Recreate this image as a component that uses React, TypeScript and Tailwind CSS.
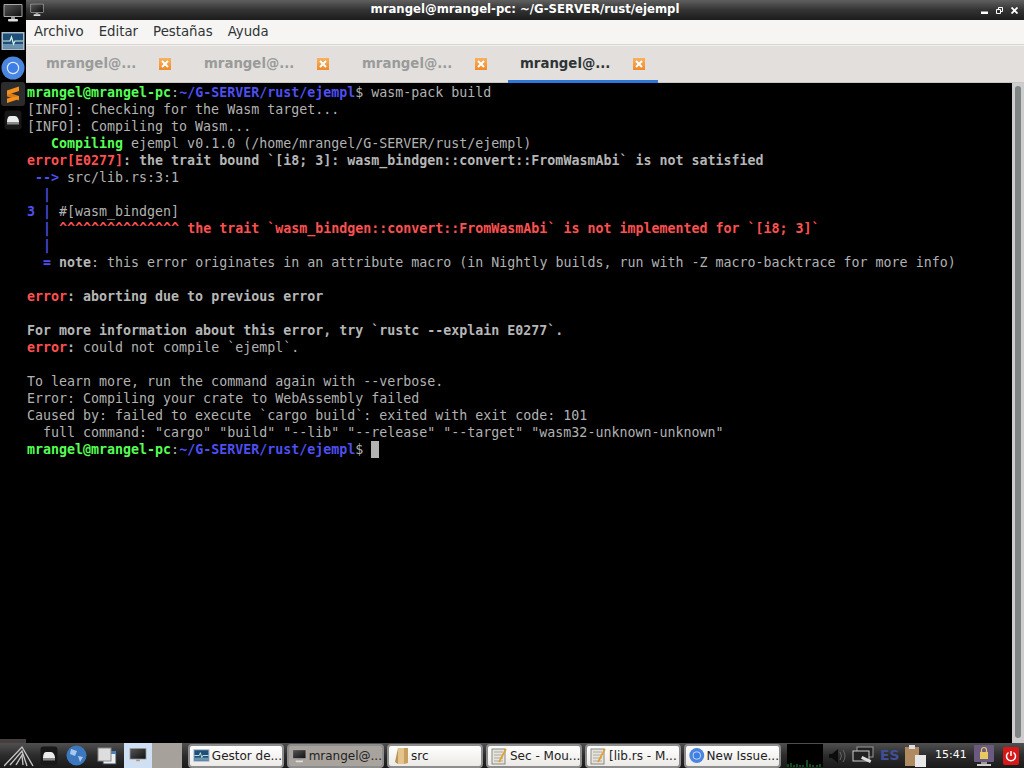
import { ReactNode } from "react";

const G = "text-[#55ff55] font-bold";
const B = "text-[#4f4ff0] font-bold";
const R = "text-[#ff5050] font-bold";
const W = "font-bold text-[#b6b6b6]";

function Line({ children }: { children?: ReactNode }) {
  return <div className="h-[17px] whitespace-pre">{children || " "}</div>;
}

function Prompt() {
  return (
    <>
      <span className={G}>mrangel@mrangel-pc</span>:<span className={B}>~/G-SERVER/rust/ejempl</span>$
    </>
  );
}

function Monitor({ size = 20 }: { size?: number }) {
  return (
    <svg width={size} height={size} viewBox="0 0 20 20">
      <defs>
        <linearGradient id="scr" x1="0" y1="0" x2="1" y2="1">
          <stop offset="0" stopColor="#555" />
          <stop offset="1" stopColor="#111" />
        </linearGradient>
      </defs>
      <rect x="0.5" y="1" width="19" height="13" rx="1" fill="#a8a8a8" />
      <rect x="1.500" y="2" width="17" height="11" fill="url(#scr)" />
      <rect x="8" y="14" width="4" height="2" fill="#999" />
      <rect x="5" y="16" width="10" height="2.500" rx="1" fill="#ddd" />
    </svg>
  );
}

function Pulse({ size = 24 }: { size?: number }) {
  return (
    <svg width={size} height={size} viewBox="0 0 24 24">
      <rect x="0.5" y="3" width="23" height="18" fill="#a9bccb" />
      <rect x="2" y="4.500" width="20" height="15" fill="#1d4f78" />
      <rect x="2" y="15" width="20" height="4.500" fill="#6b92ae" />
      <path d="M2 12h7l1.500-4 2 7 1.500-3h8" fill="none" stroke="#d8f4ea" strokeWidth="1.200" />
    </svg>
  );
}

function Chrome({ size = 24 }: { size?: number }) {
  return (
    <svg width={size} height={size} viewBox="0 0 24 24">
      <circle cx="12" cy="12" r="11.500" fill="#4a86e0" />
      <circle cx="12" cy="12" r="6.200" fill="#dfe8f8" />
      <circle cx="12" cy="12" r="5" fill="#3d7ee6" />
    </svg>
  );
}

function Sublime() {
  return (
    <svg width="14" height="19" viewBox="0 0 14 19">
      <path d="M1 7 13 11v4.500L1 11.500z" fill="#d97a14" />
      <path d="M1 5.500 13 1.500v4.500L1 10z" fill="#f28f1e" />
      <path d="M1 13.500 13 11v3L1 18z" fill="#f28f1e" />
    </svg>
  );
}

function Drive({ size = 20 }: { size?: number }) {
  return (
    <svg width={size} height={size} viewBox="0 0 20 20">
      <rect x="1.500" y="0.500" width="17" height="19" rx="3" fill="#181818" />
      <path d="M4 12c0-3 1-6 3-6h5c2 0 4 3 4 6z" fill="#ececec" />
      <rect x="4" y="12" width="12" height="2.500" fill="#8a8a8a" />
    </svg>
  );
}

function CloseTab() {
  return (
    <div className="flex h-3 w-3 items-center justify-center bg-gradient-to-b from-[#f7b25e] to-[#ee8a28]">
      <svg width="8" height="8" viewBox="0 0 8 8">
        <path d="M1 1l6 6M7 1L1 7" stroke="#fff" strokeWidth="2" />
      </svg>
    </div>
  );
}

function Tab({ active }: { active?: boolean }) {
  return (
    <div
      className={
        "ml-[8px] flex h-[37px] w-[150px] items-center justify-between border-b-[3px] pl-[12px] pr-[13px] pt-[2px] text-[13.300px] font-bold " +
        (active ? "border-[#2f78d8] text-[#2e3436]" : "border-transparent text-[#9a9a9a]")
      }
    >
      <span>mrangel@...</span>
      <CloseTab />
    </div>
  );
}

function Doc() {
  return (
    <svg width="17" height="18" viewBox="0 0 17 18" className="shrink-0">
      <rect x="1" y="2" width="13" height="15" fill="#e8e4da" stroke="#888" />
      <path d="M3 5h9M3 8h9M3 11h9M3 14h9" stroke="#aaa" />
      <path d="M15 2 8 15" stroke="#e0a030" strokeWidth="1.600" />
    </svg>
  );
}

function Folder() {
  return (
    <svg width="17" height="18" viewBox="0 0 17 18" className="shrink-0">
      <path d="M6 1h7v16H6z" fill="#e3c48c" />
      <path d="M12 1h4v15l-4 1z" fill="#c9a060" />
      <path d="M3 15l3-14v16z" fill="#b8935a" />
    </svg>
  );
}

function Task({ icon, label, active, w }: { icon: ReactNode; label: string; active?: boolean; w: string }) {
  return (
    <div
      className={
        "flex h-[24px] items-center gap-[2px] overflow-hidden rounded-[4px] border-2 border-[#8d8d8d] pl-[3px] text-[12px] text-[#222] " +
        w +
        " " +
        (active ? "bg-[#a9a39e]" : "bg-gradient-to-b from-white to-[#eceae6]")
      }
    >
      {icon}
      <span className="whitespace-pre">{label}</span>
    </div>
  );
}

export default function App() {
  return (
    <div className="flex h-[768px] w-[1024px] flex-col overflow-hidden bg-black font-['DejaVu_Sans',sans-serif]">
      <div className="flex min-h-0 flex-1">
        {/* dock */}
        <div className="flex w-[26px] flex-col items-center bg-black pt-[3px]">
          <Monitor />
          <div className="mt-[6px]"><Pulse /></div>
          <div className="mt-[3px]"><Chrome /></div>
          <div className="mt-[2px] flex h-[24px] w-[24px] items-center justify-center rounded-[3px] bg-[#2c2c2c]">
            <Sublime />
          </div>
          <div className="mt-[4px]"><Drive /></div>
          <div className="mt-auto h-[4px] w-full bg-[#45403e]" />
        </div>

        {/* terminal window */}
        <div className="flex min-w-0 flex-1 flex-col">
          <div className="flex h-[20px] items-center bg-gradient-to-b from-[#606060] via-[#333] to-[#1c1c1c]">
            <div className="flex w-[80px] pl-[4px]"><Monitor size={14} /></div>
            <span className="flex-1 text-center text-[11.700px] font-bold text-white">mrangel@mrangel-pc: ~/G-SERVER/rust/ejempl</span>
            <div className="flex w-[80px] items-center justify-end gap-[8px] pr-[6px]">
              <svg width="7" height="7" viewBox="0 0 7 7"><rect x="0" y="4.500" width="7" height="2.500" fill="#fff" /></svg>
              <svg width="7" height="7" viewBox="0 0 7 7"><path d="M2.500 2V.5h4v4H5M.5 2.500h4v4h-4z" fill="none" stroke="#fff" /></svg>
              <svg width="7" height="7" viewBox="0 0 7 7"><path d="M.5.5l6 6M6.500.5l-6 6" stroke="#fff" strokeWidth="1.800" /></svg>
            </div>
          </div>
          <div className="flex h-[25px] items-center gap-[15px] border-b border-[#d8d6d2] bg-[#f6f5f3] pl-[8px] text-[13.300px] text-[#2e3436]">
            <span>Archivo</span>
            <span>Editar</span>
            <span>Pestañas</span>
            <span>Ayuda</span>
          </div>
          <div className="flex h-[38px] border-t border-[#f0efed] border-b border-b-[#c8c6c2] bg-[#e2dfdc]">
            <Tab />
            <Tab />
            <Tab />
            <Tab active />
          </div>
          <div className="flex min-h-0 flex-1">
            <div className="min-w-0 flex-1 bg-black pl-[1px] pt-[1px] font-['DejaVu_Sans_Mono',monospace] text-[13.300px] leading-[17px] text-[#b2b2b2]">
              <Line><Prompt /> wasm-pack build</Line>
              <Line>[INFO]: Checking for the Wasm target...</Line>
              <Line>[INFO]: Compiling to Wasm...</Line>
              <Line><span className={G}>   Compiling</span> ejempl v0.1.0 (/home/mrangel/G-SERVER/rust/ejempl)</Line>
              <Line><span className={R}>error[E0277]</span><span className={W}>: the trait bound `[i8; 3]: wasm_bindgen::convert::FromWasmAbi` is not satisfied</span></Line>
              <Line> <span className={B}>--&gt;</span> src/lib.rs:3:1</Line>
              <Line><span className={B}>  |</span></Line>
              <Line><span className={B}>3 |</span> #[wasm_bindgen]</Line>
              <Line><span className={B}>  |</span> <span className={R}>^^^^^^^^^^^^^^^ the trait `wasm_bindgen::convert::FromWasmAbi` is not implemented for `[i8; 3]`</span></Line>
              <Line><span className={B}>  |</span></Line>
              <Line>  <span className={B}>=</span> <span className={W}>note</span>: this error originates in an attribute macro (in Nightly builds, run with -Z macro-backtrace for more info)</Line>
              <Line />
              <Line><span className={R}>error</span><span className={W}>: aborting due to previous error</span></Line>
              <Line />
              <Line><span className={W}>For more information about this error, try `rustc --explain E0277`.</span></Line>
              <Line><span className={R}>error</span><span className={W}>:</span> could not compile `ejempl`.</Line>
              <Line />
              <Line>To learn more, run the command again with --verbose.</Line>
              <Line>Error: Compiling your crate to WebAssembly failed</Line>
              <Line>Caused by: failed to execute `cargo build`: exited with exit code: 101</Line>
              <Line>  full command: "cargo" "build" "--lib" "--release" "--target" "wasm32-unknown-unknown"</Line>
              <Line><Prompt /> <span className="inline-block h-[17px] w-[8px] bg-[#b2b2b2] align-top" /></Line>
            </div>
            {/* scrollbar */}
            <div className="w-[12px] bg-[#cdcdcd] px-[3px] pb-[5px] pt-[3px]">
              <div className="h-full rounded-[3px] bg-[#7f8484]" />
            </div>
          </div>
        </div>
      </div>

      {/* bottom panel */}
      <div className="flex h-[25px] items-center bg-gradient-to-b from-[#505050] via-[#2c2c2c] to-[#1a1a1a]">
        <div className="flex w-[124px] items-center pl-[4px]">
          <svg width="30" height="22" viewBox="0 0 30 22">
            <path d="M0 21 18 2l11 19M6 20 18 6l5 15M12 20l6-10 1 10" fill="none" stroke="#c8c8c8" strokeWidth="1.300" />
          </svg>
          <div className="ml-[5px]"><Drive size={20} /></div>
          <svg className="ml-[7px]" width="21" height="21" viewBox="0 0 21 21">
            <circle cx="10.500" cy="10.500" r="10" fill="#3c78c0" />
            <path d="M5 4l6 2-2 5-5-2zM12 11l5 1-3 5z" fill="#a9c8ea" />
          </svg>
          <svg className="ml-[10px]" width="20" height="20" viewBox="0 0 20 20">
            <rect x="6" y="5" width="13" height="13" fill="#eee" stroke="#345" />
            <rect x="6" y="5" width="13" height="3" fill="#4a7fc0" />
            <rect x="1" y="2" width="13" height="13" fill="#ddd" stroke="#888" />
          </svg>
        </div>
        <div className="flex h-[25px] w-[28px] items-center justify-center bg-[#cfe0f5]"><Monitor size={18} /></div>
        <div className="h-[25px] w-[30px] bg-[#a7a19c]" />
        <div className="ml-[6px] flex gap-[3px]">
          <Task w="w-[96px]" icon={<Pulse size={19} />} label="Gestor de..." />
          <Task w="w-[97px]" active icon={<Monitor size={18} />} label="mrangel@..." />
          <Task w="w-[96px]" icon={<Folder />} label="src" />
          <Task w="w-[96px]" icon={<Doc />} label="Sec - Mou..." />
          <Task w="w-[96px]" icon={<Doc />} label="[lib.rs - M..." />
          <Task w="w-[97px]" icon={<Chrome size={19} />} label="New Issue..." />
        </div>
        <svg className="ml-[6px]" width="36" height="23" viewBox="0 0 36 23">
          <rect width="36" height="23" fill="#000" />
          <path d="M1 23v-3M4 23v-4M7 23v-2M10 23v-3M13 23v-2M16 23v-2M20 23v-7M23 23v-3M26 23v-2M30 23v-2M33 23v-3" stroke="#1e9e3a" />
        </svg>
        <svg className="ml-[5px]" width="20" height="18" viewBox="0 0 20 18">
          <path d="M1 7h3l6-5v14l-6-5H1z" fill="#0c0c0c" />
          <path d="M12 5q3 4 0 8M15 3q4 6 0 12" stroke="#666" fill="none" />
        </svg>
        <svg className="ml-[4px]" width="22" height="20" viewBox="0 0 22 20">
          <rect x="5" y="1" width="16" height="10" fill="#222" stroke="#999" />
          <rect x="1" y="5" width="16" height="10" fill="#222" stroke="#ccc" />
          <rect x="9" y="12" width="10" height="3" fill="#ddd" transform="rotate(25 14 14)" />
        </svg>
        <span className="ml-[6px] w-[20px] text-[14px] font-bold text-[#3f4f98]">ES</span>
        <svg className="ml-[5px]" width="22" height="22" viewBox="0 0 22 22">
          <rect x="0" y="2" width="14" height="19" fill="#b08a60" />
          <rect x="4" y="0" width="6" height="4" fill="#ddd" />
          <rect x="10" y="10" width="11" height="12" fill="#e8e8e8" />
        </svg>
        <span className="ml-[8px] w-[32px] text-[11px] text-white">15:41</span>
        <svg className="ml-[7px]" width="20" height="22" viewBox="0 0 20 22">
          <rect x="0" y="0" width="20" height="17" rx="1" fill="#6a5a80" />
          <rect x="7" y="17" width="6" height="2" fill="#999" />
          <rect x="3" y="19" width="14" height="2" fill="#ccc" />
          <rect x="6" y="7" width="8" height="7" fill="#e8c860" />
          <path d="M7.500 7V5a2.500 2.500 0 0 1 5 0v2" stroke="#e8c860" strokeWidth="1.200" fill="none" />
        </svg>
        <div className="ml-[9px] flex h-[18px] w-[16px] items-center justify-center rounded-[2px] bg-[#d81818]">
          <svg width="12" height="12" viewBox="0 0 12 12"><path d="M3.500 2.500a4.500 4.500 0 1 0 5 0M6 1v5" stroke="#fff" strokeWidth="1.500" fill="none" /></svg>
        </div>
      </div>
    </div>
  );
}
